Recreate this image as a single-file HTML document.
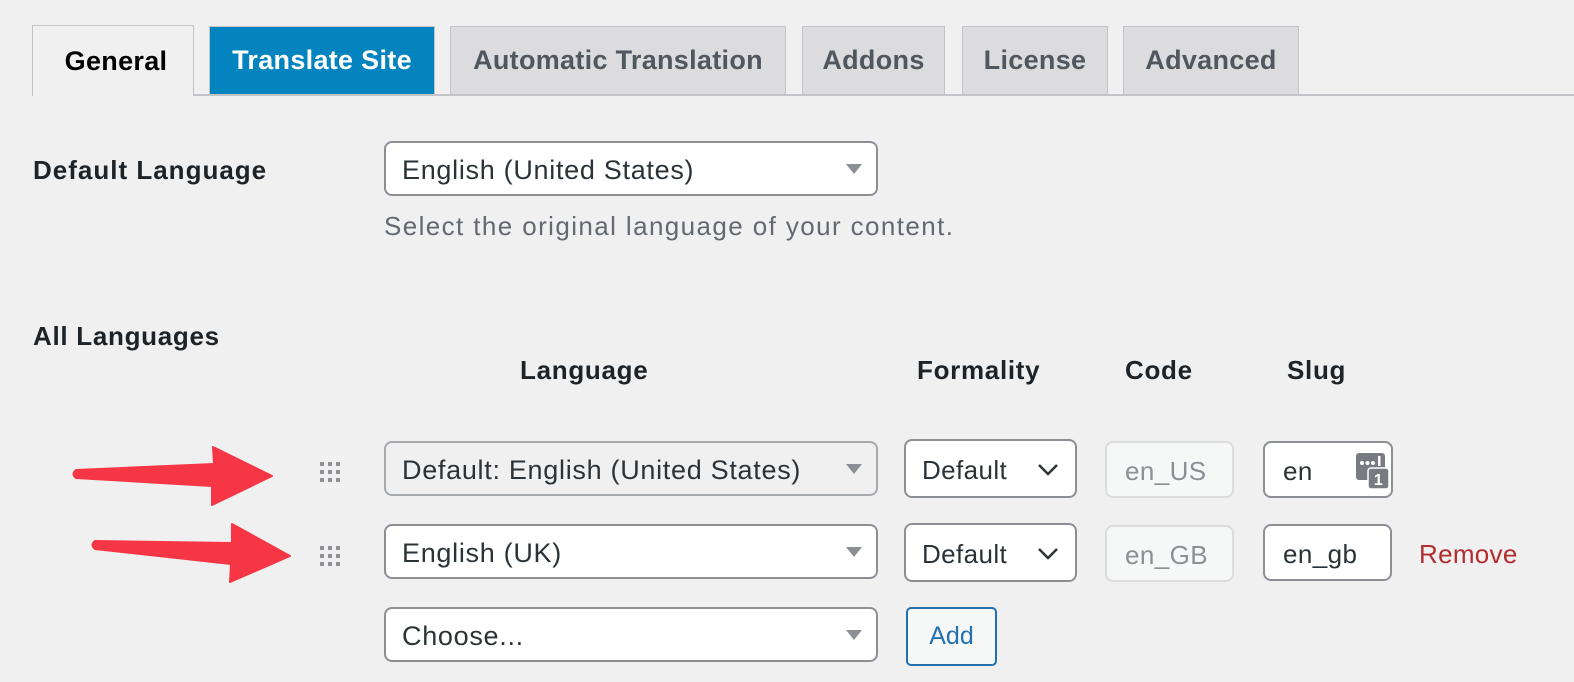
<!DOCTYPE html>
<html><head><style>
body{margin:0;width:1574px;height:682px;background:#f0f0f1;font-family:"Liberation Sans",sans-serif;position:relative;overflow:hidden;color:#1d2327}
.a{position:absolute}
.tab{position:absolute;top:26px;height:68px;background:#dcdcde;border:1px solid #c3c4c7;border-bottom:none;box-sizing:border-box;font-weight:bold;font-size:27px;letter-spacing:0.3px;color:#50575e;display:flex;align-items:center;justify-content:center}
.sel{position:absolute;background:#fff;border:2px solid #8c8f94;border-radius:8px;box-sizing:border-box;font-size:27px;letter-spacing:0.7px;color:#2c3338;display:flex;align-items:center;padding-left:16px;padding-top:3px}
.sel .car{position:absolute;right:14px;top:50%;margin-top:-5px;width:0;height:0;border-left:8px solid transparent;border-right:8px solid transparent;border-top:10px solid #8c8f94}
.lbl{position:absolute;font-weight:bold;font-size:26px;letter-spacing:0.7px;color:#1d2327}
.inp{position:absolute;background:#fff;border:2px solid #8c8f94;border-radius:8px;box-sizing:border-box;font-size:26px;letter-spacing:0.4px;color:#2c3338;display:flex;align-items:center;padding-left:18px;padding-top:3px}
.dis{background:#f6f7f7;border-color:#dcdcde;color:#8c8f94}
</style></head><body>
<div class="a" style="left:32px;top:94px;width:1542px;height:2px;background:#c3c4c7"></div>
<div class="tab" style="left:32px;top:25px;width:162px;height:71px;background:#f0f0f1;color:#000;padding-left:6px">General</div>
<div class="tab" style="left:209px;width:226px;background:#0384bf;border-color:#c3c4c7;color:#fff">Translate Site</div>
<div class="tab" style="left:450px;width:336px">Automatic Translation</div>
<div class="tab" style="left:802px;width:143px">Addons</div>
<div class="tab" style="left:962px;width:146px">License</div>
<div class="tab" style="left:1123px;width:176px">Advanced</div>

<div class="lbl" style="left:33px;top:155px;letter-spacing:1px">Default Language</div>
<div class="sel" style="left:384px;top:141px;width:494px;height:55px">English (United States)<span class="car"></span></div>
<div class="a" style="left:384px;top:211px;font-size:26px;letter-spacing:1.4px;color:#646970">Select the original language of your content.</div>

<div class="lbl" style="left:33px;top:321px">All Languages</div>
<div class="lbl" style="left:520px;top:355px">Language</div>
<div class="lbl" style="left:917px;top:355px">Formality</div>
<div class="lbl" style="left:1125px;top:355px">Code</div>
<div class="lbl" style="left:1287px;top:355px">Slug</div>

<svg class="a" style="left:0;top:0" width="320" height="600">
<path d="M76,470 L214,464 L213,447 L272,476 L212,505 L212,486 L76,478 Q71,474 76,470Z" fill="#f63644" stroke="#f63644" stroke-width="2" stroke-linejoin="round"/>
<path d="M95,541 L232,543 L232,524 L290,556 L230,582 L231,564 L95,549 Q90,545 95,541Z" fill="#f63644" stroke="#f63644" stroke-width="2" stroke-linejoin="round"/>
</svg>
<div class="a" style="left:320px;top:462px;width:20px;height:20px">
<i class="a" style="left:0;top:0;width:4px;height:4px;background:#8c8f94;box-shadow:8px 0 #8c8f94,16px 0 #8c8f94,0 8px #8c8f94,8px 8px #8c8f94,16px 8px #8c8f94,0 16px #8c8f94,8px 16px #8c8f94,16px 16px #8c8f94"></i></div>
<div class="a" style="left:320px;top:546px;width:20px;height:20px">
<i class="a" style="left:0;top:0;width:4px;height:4px;background:#8c8f94;box-shadow:8px 0 #8c8f94,16px 0 #8c8f94,0 8px #8c8f94,8px 8px #8c8f94,16px 8px #8c8f94,0 16px #8c8f94,8px 16px #8c8f94,16px 16px #8c8f94"></i></div>

<div class="sel" style="left:384px;top:441px;width:494px;height:55px;background:#f0f0f1;border-color:#a7aaad">Default: English (United States)<span class="car"></span></div>
<div class="sel" style="left:384px;top:524px;width:494px;height:55px">English (UK)<span class="car"></span></div>
<div class="sel" style="left:384px;top:607px;width:494px;height:55px">Choose...<span class="car"></span></div>

<div class="inp" style="left:904px;top:439px;width:173px;height:59px;padding-left:16px">Default<svg class="a" style="right:16px;top:22px" width="22" height="14"><path d="M2,2 L11,11 L20,2" fill="none" stroke="#2c3338" stroke-width="2.5"/></svg></div>
<div class="inp" style="left:904px;top:523px;width:173px;height:59px;padding-left:16px">Default<svg class="a" style="right:16px;top:22px" width="22" height="14"><path d="M2,2 L11,11 L20,2" fill="none" stroke="#2c3338" stroke-width="2.5"/></svg></div>

<div class="inp dis" style="left:1105px;top:441px;width:129px;height:57px">en_US</div>
<div class="inp dis" style="left:1105px;top:525px;width:129px;height:57px">en_GB</div>
<div class="inp" style="left:1263px;top:441px;width:130px;height:57px">en
<svg class="a" style="left:89px;top:8px" width="38" height="40">
<rect x="2" y="2" width="29" height="27" rx="3" fill="#787c82"/>
<circle cx="8" cy="12" r="2" fill="#fff"/><circle cx="13.5" cy="12" r="2" fill="#fff"/><circle cx="19" cy="12" r="2" fill="#fff"/>
<rect x="24" y="5" width="2.5" height="10" fill="#fff"/>
<rect x="14" y="17" width="21" height="21" rx="3" fill="#787c82" stroke="#fff" stroke-width="1.5"/>
<text x="24.5" y="34" fill="#fff" font-size="16" font-weight="bold" text-anchor="middle" font-family="Liberation Sans">1</text>
</svg>
</div>
<div class="inp" style="left:1263px;top:524px;width:129px;height:57px">en_gb</div>
<div class="a" style="left:1419px;top:539px;font-size:26px;letter-spacing:0.3px;color:#b32d2e">Remove</div>

<div class="a" style="left:906px;top:607px;width:91px;height:59px;box-sizing:border-box;border:2px solid #2271b1;border-radius:5px;background:#f6f7f7;color:#2271b1;font-size:25px;display:flex;align-items:center;justify-content:center">Add</div>
</body></html>
